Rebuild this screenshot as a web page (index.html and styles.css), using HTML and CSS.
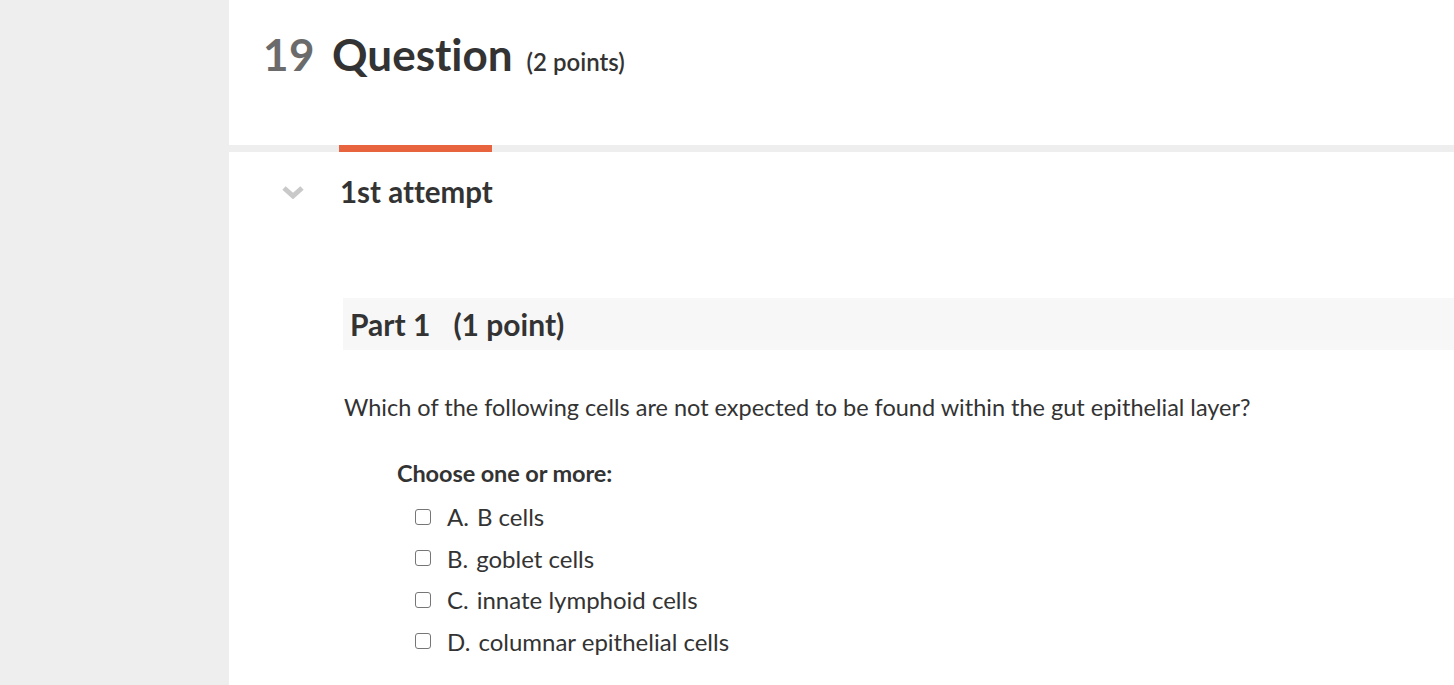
FILE: index.html
```html
<!DOCTYPE html>
<html>
<head>
<meta charset="utf-8">
<link rel="stylesheet" href="styles.css">
</head>
<body>
<div class="page">
  <aside class="sidebar"></aside>
  <main class="main">
    <header class="qhead">
      <span class="qnum">19</span>
      <span class="qtitle">Question</span>
      <span class="qpoints">(2 points)</span>
    </header>
    <div class="tabbar"><div class="tab-active"></div></div>
    <div class="attempt">
      <svg class="chev" width="22" height="14" viewBox="0 0 22 14"><path d="M2 3 L11 11 L20 3" fill="none" stroke="#c9c9c9" stroke-width="5" stroke-linejoin="miter"/></svg>
      <h2 class="attempt-title">1st attempt</h2>
    </div>
    <div class="part">
      <div class="part-head"><span>Part 1</span><span class="part-pts">(1 point)</span></div>
      <p class="prompt">Which of the following cells are not expected to be found within the gut epithelial layer?</p>
      <div class="choices">
        <div class="choose">Choose one or more:</div>
        <label class="opt"><span class="box"></span><span class="letter">A.</span><span>B cells</span></label>
        <label class="opt"><span class="box"></span><span class="letter">B.</span><span>goblet cells</span></label>
        <label class="opt"><span class="box"></span><span class="letter">C.</span><span>innate lymphoid cells</span></label>
        <label class="opt"><span class="box"></span><span class="letter">D.</span><span>columnar epithelial cells</span></label>
      </div>
    </div>
  </main>
</div>
</body>
</html>
```
FILE: styles.css
```css
* { box-sizing: border-box; }
html, body { margin: 0; padding: 0; }
body {
  font-family: Lato, "Liberation Sans", sans-serif;
  font-variant-ligatures: none;
  color: #333;
  background: #fff;
  width: 1454px;
  height: 685px;
  overflow: hidden;
}
.page { display: flex; height: 685px; }
.sidebar { width: 229px; flex: none; background: #eeeeee; }
.main { flex: 1; display: flex; flex-direction: column; }
.qhead {
  display: flex;
  align-items: baseline;
  padding: 28px 0 0 34px;
  height: 145px;
}
.qnum { font-size: 44px; font-weight: 700; color: #6b6b6b; margin-right: 17px; letter-spacing: 0.5px; }
.qtitle { font-size: 44px; font-weight: 700; color: #333; margin-right: 14px; }
.qpoints { font-size: 24px; font-weight: 600; color: #333; }
.tabbar { height: 7px; background: #eeeeee; }
.tab-active { margin-left: 110px; width: 153px; height: 7px; background: #e8643f; }
.attempt {
  display: flex;
  align-items: center;
  height: 78px;
  padding-left: 53px;
}
.chev { margin-right: 36px; margin-top: 2px; }
.attempt-title { margin: 0; font-size: 29.5px; font-weight: 700; color: #333; }
.part { padding: 68px 0 0 114px; }
.part-head {
  background: #f7f7f7;
  height: 52px;
  display: flex;
  align-items: center;
  padding-left: 7px;
  font-size: 30px;
  font-weight: 700;
  color: #333;
}
.part-pts { margin-left: 23px; }
.prompt { margin: 42px 0 0 1px; font-size: 23.5px; line-height: 30px; color: #333; }
.choices { padding: 36px 0 0 54px; }
.choose { font-size: 23.5px; font-weight: 700; letter-spacing: -0.1px; line-height: 30px; color: #333; margin-bottom: 8px; }
.opt { display: flex; align-items: center; height: 41.5px; font-size: 24px; color: #333; padding-left: 18px; }
.box { width: 16px; height: 16px; border: 1.5px solid #767676; border-radius: 3px; margin-right: 16px; background: #fff; }
.letter { margin-right: 8px; }
```
